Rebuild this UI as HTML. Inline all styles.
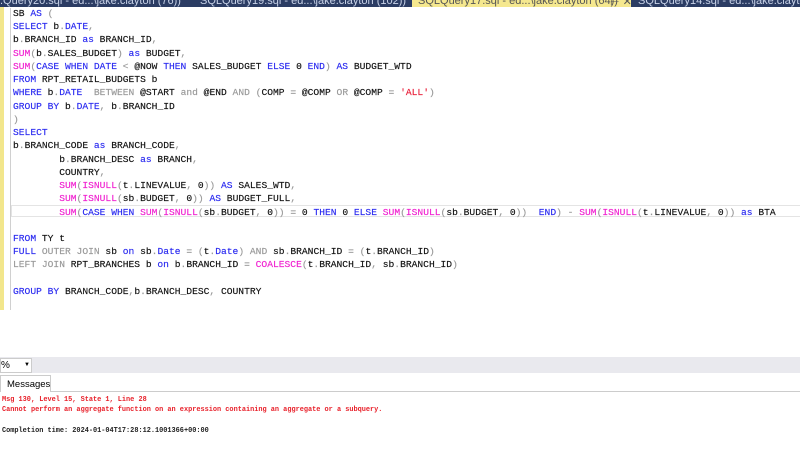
<!DOCTYPE html>
<html><head><style>
body{margin:0;width:800px;height:469px;background:#fff;position:relative;overflow:hidden;font-family:"Liberation Sans",sans-serif}
.tabs{position:absolute;left:0;top:0;width:800px;height:7px;background:#2b3c63;overflow:hidden}
.tab{position:absolute;top:-5px;font-size:11px;color:#c9d3e8;white-space:nowrap}
.ytab{position:absolute;left:412px;top:0;width:219px;height:7px;background:#f5e88f}
.ybar{position:absolute;left:0;top:7px;width:4px;height:303px;background:#f2e68c}
.gline{position:absolute;left:10px;top:8px;width:1px;height:302px;background:#d0d0d0}
pre{position:absolute;left:13px;top:7px;margin:0;font-family:"Liberation Mono",monospace;font-size:9.63px;line-height:13.24px;color:#111;-webkit-text-stroke:0.15px currentColor}
.k{color:#2a2af0}.f{color:#f020d0}.g{color:#999}.s{color:#e8203a}
.cur{position:absolute;left:11px;top:205px;width:789px;height:12px;border:1px solid #e4e4e4;border-right:none;box-sizing:border-box}
.bar{position:absolute;left:0;top:357px;width:800px;height:16px;background:#e9e9ee}
.combo{position:absolute;left:0;top:358px;width:30px;height:13px;background:#fff;border:1px solid #ccc;font-size:10px;line-height:13px}
.mtab{position:absolute;left:0;top:375px;width:51px;height:17px;background:#fff;border:1px solid #ccc;border-bottom:none;font-size:9.5px;line-height:17px;padding-left:6px;box-sizing:border-box}
.mline{position:absolute;left:51px;top:391px;width:749px;height:1px;background:#ccc}
.msg{position:absolute;left:2px;font-family:"Liberation Mono",monospace;font-size:6.9px;font-weight:bold;white-space:pre}
</style></head><body>
<div class="tabs">
<span class="tab" style="left:0">.Query20.sql - ed...\jake.clayton (76))</span>
<span class="tab" style="left:200px">SQLQuery19.sql - ed...\jake.clayton (102))</span>
<div class="ytab"></div>
<span class="tab" style="left:418px;color:#555">SQLQuery17.sql - ed...\jake.clayton (64))</span>
<span class="tab" style="left:610px;color:#555">⊢ ✕</span>
<span class="tab" style="left:638px">SQLQuery14.sql - ed...\jake.clayton (7</span>
</div>
<div class="ybar"></div><div class="gline"></div>
<div class="cur"></div>
<pre>SB <span class="k">AS</span> <span class="g">(</span>
<span class="k">SELECT</span> b<span class="g">.</span><span class="k">DATE</span><span class="g">,</span>
b<span class="g">.</span>BRANCH_ID <span class="k">as</span> BRANCH_ID<span class="g">,</span>
<span class="f">SUM</span><span class="g">(</span>b<span class="g">.</span>SALES_BUDGET<span class="g">)</span> <span class="k">as</span> BUDGET<span class="g">,</span>
<span class="f">SUM</span><span class="g">(</span><span class="k">CASE WHEN DATE</span> <span class="g">&lt;</span> @NOW <span class="k">THEN</span> SALES_BUDGET <span class="k">ELSE</span> 0 <span class="k">END</span><span class="g">)</span> <span class="k">AS</span> BUDGET_WTD
<span class="k">FROM</span> RPT_RETAIL_BUDGETS b
<span class="k">WHERE</span> b<span class="g">.</span><span class="k">DATE</span>  <span class="g">BETWEEN</span> @START <span class="g">and</span> @END <span class="g">AND</span> <span class="g">(</span>COMP <span class="g">=</span> @COMP <span class="g">OR</span> @COMP <span class="g">=</span> <span class="s">'ALL'</span><span class="g">)</span>
<span class="k">GROUP BY</span> b<span class="g">.</span><span class="k">DATE</span><span class="g">,</span> b<span class="g">.</span>BRANCH_ID
<span class="g">)</span>
<span class="k">SELECT</span>
b<span class="g">.</span>BRANCH_CODE <span class="k">as</span> BRANCH_CODE<span class="g">,</span>
        b<span class="g">.</span>BRANCH_DESC <span class="k">as</span> BRANCH<span class="g">,</span>
        COUNTRY<span class="g">,</span>
        <span class="f">SUM</span><span class="g">(</span><span class="f">ISNULL</span><span class="g">(</span>t<span class="g">.</span>LINEVALUE<span class="g">,</span> 0<span class="g">))</span> <span class="k">AS</span> SALES_WTD<span class="g">,</span>
        <span class="f">SUM</span><span class="g">(</span><span class="f">ISNULL</span><span class="g">(</span>sb<span class="g">.</span>BUDGET<span class="g">,</span> 0<span class="g">))</span> <span class="k">AS</span> BUDGET_FULL<span class="g">,</span>
        <span class="f">SUM</span><span class="g">(</span><span class="k">CASE WHEN</span> <span class="f">SUM</span><span class="g">(</span><span class="f">ISNULL</span><span class="g">(</span>sb<span class="g">.</span>BUDGET<span class="g">,</span> 0<span class="g">))</span> <span class="g">=</span> 0 <span class="k">THEN</span> 0 <span class="k">ELSE</span> <span class="f">SUM</span><span class="g">(</span><span class="f">ISNULL</span><span class="g">(</span>sb<span class="g">.</span>BUDGET<span class="g">,</span> 0<span class="g">))</span>  <span class="k">END</span><span class="g">)</span> <span class="g">-</span> <span class="f">SUM</span><span class="g">(</span><span class="f">ISNULL</span><span class="g">(</span>t<span class="g">.</span>LINEVALUE<span class="g">,</span> 0<span class="g">))</span> <span class="k">as</span> BTA

<span class="k">FROM</span> TY t
<span class="k">FULL</span> <span class="g">OUTER JOIN</span> sb <span class="k">on</span> sb<span class="g">.</span><span class="k">Date</span> <span class="g">=</span> <span class="g">(</span>t<span class="g">.</span><span class="k">Date</span><span class="g">)</span> <span class="g">AND</span> sb<span class="g">.</span>BRANCH_ID <span class="g">=</span> <span class="g">(</span>t<span class="g">.</span>BRANCH_ID<span class="g">)</span>
<span class="g">LEFT JOIN</span> RPT_BRANCHES b <span class="k">on</span> b<span class="g">.</span>BRANCH_ID <span class="g">=</span> <span class="f">COALESCE</span><span class="g">(</span>t<span class="g">.</span>BRANCH_ID<span class="g">,</span> sb<span class="g">.</span>BRANCH_ID<span class="g">)</span>

<span class="k">GROUP BY</span> BRANCH_CODE<span class="g">,</span>b<span class="g">.</span>BRANCH_DESC<span class="g">,</span> COUNTRY</pre>
<div class="bar"></div>
<div class="combo">%<span style="position:absolute;left:23px;top:0;font-size:6px">▼</span></div>
<div class="mtab">Messages</div><div class="mline"></div>
<div class="msg" style="top:396px;color:#e8202a">Msg 130, Level 15, State 1, Line 28</div>
<div class="msg" style="top:406px;color:#e8202a">Cannot perform an aggregate function on an expression containing an aggregate or a subquery.</div>
<div class="msg" style="top:427px;color:#222">Completion time: 2024-01-04T17:28:12.1001366+00:00</div>
</body></html>
